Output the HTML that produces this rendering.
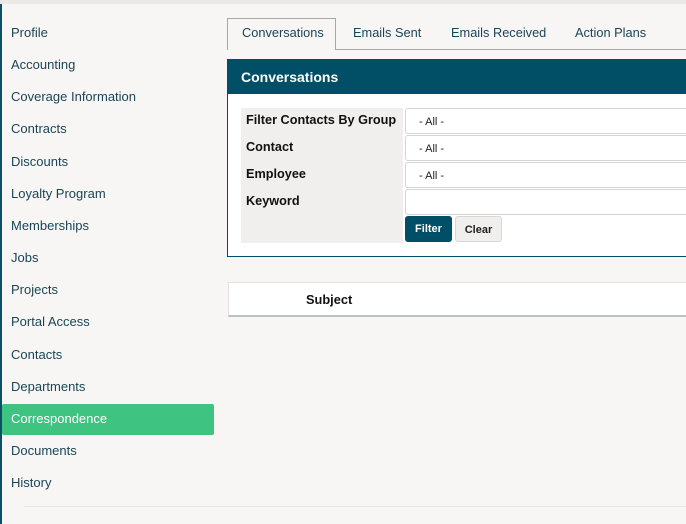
<!DOCTYPE html>
<html><head><style>
*{margin:0;padding:0;box-sizing:border-box}
body{width:686px;height:524px;overflow:hidden;background:#f7f6f4;font-family:"Liberation Sans",Arial,sans-serif;position:relative}
.top{position:absolute;left:0;top:0;width:686px;height:4px;background:#ebe9e6}
.lb{position:absolute;left:0;top:4px;width:2px;height:520px;background:#0d4f63}
.nav{position:absolute;left:11px;font-size:13px;color:#1b4556}
.act{position:absolute;left:2px;top:404px;width:212px;height:31px;background:#3ec381;border-radius:2px}
.tabline{position:absolute;left:227px;top:49px;width:459px;height:1px;background:#a8a8a8}
.tab{position:absolute;top:33px;font-size:12.8px;color:#1b4556;line-height:1}
.tab1{position:absolute;left:227px;top:18px;width:109px;height:32px;border:1px solid #a8a8a8;border-bottom:none;background:#f7f6f4}
.hdr{position:absolute;left:227px;top:59px;width:459px;height:35px;background:#004f66;color:#fff;font-weight:bold;font-size:14px;padding:10px 0 0 14px}
.panel{position:absolute;left:227px;top:93px;width:470px;height:164px;border:1px solid #004f66;border-top:none;background:#fff}
.gray{position:absolute;left:241px;top:108px;width:162px;height:135px;background:#f0efed}
.lbl{position:absolute;left:246px;font-size:12.7px;font-weight:bold;color:#111}
.inp{position:absolute;left:405px;width:290px;height:26px;background:#fff;border:1px solid #d4d4d4;border-radius:3px;font-size:11px;color:#222;padding:7px 0 0 13px}
.btn{position:absolute;top:216px;height:26px;font-size:11px;font-weight:bold;border-radius:3px;text-align:center;padding-top:7px}
.subj{position:absolute;left:228px;top:282px;width:470px;height:35px;background:#fff;border:1px solid #e0e0e0;border-bottom:2px solid #b9c3c6;font-size:12.8px;font-weight:bold;color:#111;padding:9px 0 0 77px}
.bl{position:absolute;left:24px;top:506px;width:662px;height:1px;background:#e9e8e5}
</style></head><body>
<div class="top"></div><div class="lb"></div>
<div class="act"></div>
<div class="nav" style="top:25px">Profile</div>
<div class="nav" style="top:57px">Accounting</div>
<div class="nav" style="top:89px">Coverage Information</div>
<div class="nav" style="top:121px">Contracts</div>
<div class="nav" style="top:154px">Discounts</div>
<div class="nav" style="top:186px">Loyalty Program</div>
<div class="nav" style="top:218px">Memberships</div>
<div class="nav" style="top:250px">Jobs</div>
<div class="nav" style="top:282px">Projects</div>
<div class="nav" style="top:314px">Portal Access</div>
<div class="nav" style="top:347px">Contacts</div>
<div class="nav" style="top:379px">Departments</div>
<div class="nav" style="top:411px;color:#fff">Correspondence</div>
<div class="nav" style="top:443px">Documents</div>
<div class="nav" style="top:475px">History</div>
<div class="tabline"></div>
<div class="tab1"></div>
<div class="tab" style="left:242px;top:27px">Conversations</div>
<div class="tab" style="left:353px;top:27px">Emails Sent</div>
<div class="tab" style="left:451px;top:27px">Emails Received</div>
<div class="tab" style="left:575px;top:27px">Action Plans</div>
<div class="panel"></div>
<div class="hdr">Conversations</div>
<div class="gray"></div>
<div class="lbl" style="top:113px">Filter Contacts By Group</div>
<div class="lbl" style="top:140px">Contact</div>
<div class="lbl" style="top:167px">Employee</div>
<div class="lbl" style="top:194px">Keyword</div>
<div class="inp" style="top:108px">- All -</div>
<div class="inp" style="top:135px">- All -</div>
<div class="inp" style="top:162px">- All -</div>
<div class="inp" style="top:189px"></div>
<div class="btn" style="left:405px;width:47px;background:#004f66;color:#fff">Filter</div>
<div class="btn" style="left:455px;width:47px;background:#f0efed;border:1px solid #d8d8d8;color:#222">Clear</div>
<div class="subj">Subject</div>
<div class="bl"></div>
</body></html>
